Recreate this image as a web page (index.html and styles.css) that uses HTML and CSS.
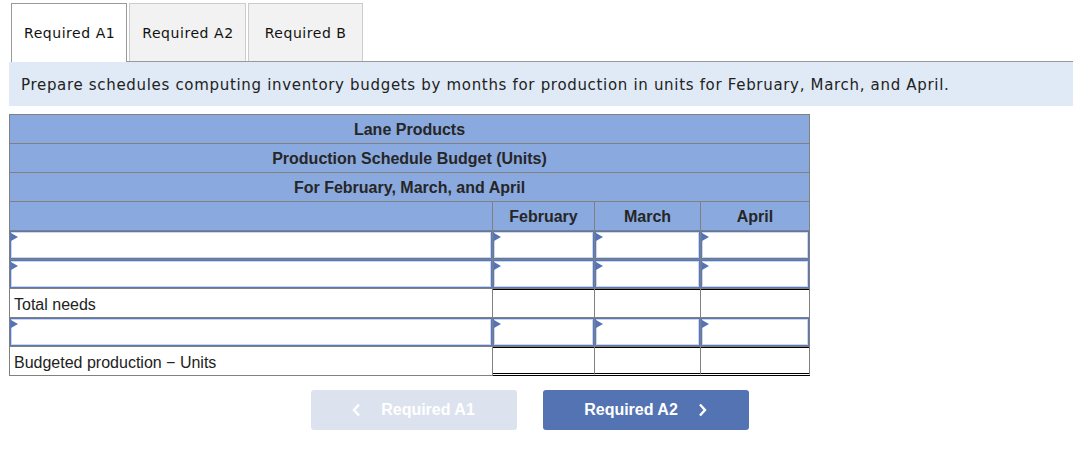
FILE: index.html
```html
<!DOCTYPE html>
<html>
<head>
<meta charset="utf-8">
<link rel="stylesheet" href="styles.css">
</head>
<body>
<div class="page">
  <div class="tabs">
    <div class="tab active">Required A1</div>
    <div class="tab">Required A2</div>
    <div class="tab">Required B</div>
  </div>
  <div class="prompt">Prepare schedules computing inventory budgets by months for production in units for February, March, and April.</div>
  <table class="sched">
    <colgroup>
      <col class="c-label">
      <col class="c-feb">
      <col class="c-mar">
      <col class="c-apr">
    </colgroup>
    <tr class="hdr"><th colspan="4">Lane Products</th></tr>
    <tr class="hdr"><th colspan="4">Production Schedule Budget (Units)</th></tr>
    <tr class="hdr"><th colspan="4">For February, March, and April</th></tr>
    <tr class="hdr"><th></th><th>February</th><th>March</th><th>April</th></tr>
    <tr class="inrow">
      <td><div class="box"></div></td>
      <td><div class="box"></div></td>
      <td><div class="box"></div></td>
      <td><div class="box"></div></td>
    </tr>
    <tr class="inrow">
      <td><div class="box"></div></td>
      <td><div class="box"></div></td>
      <td><div class="box"></div></td>
      <td><div class="box"></div></td>
    </tr>
    <tr class="txtrow">
      <td class="label">Total needs</td>
      <td class="sum"></td>
      <td class="sum"></td>
      <td class="sum"></td>
    </tr>
    <tr class="inrow">
      <td><div class="box"></div></td>
      <td><div class="box"></div></td>
      <td><div class="box"></div></td>
      <td><div class="box"></div></td>
    </tr>
    <tr class="txtrow">
      <td class="label">Budgeted production &minus; Units</td>
      <td class="total"></td>
      <td class="total"></td>
      <td class="total"></td>
    </tr>
  </table>
  <div class="nav">
    <div class="btn disabled">
      <svg class="chev" width="9" height="14" viewBox="0 0 9 14"><polyline points="7,1.5 2,7 7,12.5" fill="none" stroke="#fff" stroke-width="2.4"/></svg>
      <span>Required A1</span>
    </div>
    <div class="btn primary">
      <span>Required A2</span>
      <svg class="chev" width="9" height="14" viewBox="0 0 9 14"><polyline points="2,1.5 7,7 2,12.5" fill="none" stroke="#fff" stroke-width="2.4"/></svg>
    </div>
  </div>
</div>
</body>
</html>
```

FILE: styles.css
```css
* { box-sizing: border-box; }
html, body { margin: 0; padding: 0; background: #fff; }
.page { padding: 3px 0 0 9px; width: 1073px; }

.tabs {
  display: flex;
  gap: 2px;
  margin-left: 2px;
  border-bottom: 1px solid #999;
  height: 59px;
}
.tab {
  font-family: "DejaVu Sans", Verdana, sans-serif;
  font-size: 14px;
  letter-spacing: 0.55px;
  color: #111;
  height: 58px;
  min-width: 115px;
  padding: 0 11px 0 12px;
  display: flex;
  align-items: center;
  justify-content: center;
  background: #f2f2f2;
  border: 1px solid #ccc;
  border-bottom: none;
}
.tab.active {
  background: #fff;
  border-color: #999;
  height: 59px;
  padding-bottom: 1px;
}

.prompt {
  font-family: "DejaVu Sans", Verdana, sans-serif;
  font-size: 15px;
  letter-spacing: 0.68px;
  color: #222;
  background: #dfeaf6;
  height: 44px;
  padding: 2px 12px 0;
  display: flex;
  align-items: center;
}

.sched {
  margin-top: 8px;
  border-collapse: separate;
  border-spacing: 0;
  table-layout: fixed;
  width: 800px;
  border-top: 1px solid #808080;
  border-left: 1px solid #808080;
  font-family: "Liberation Sans", Arial, sans-serif;
  font-size: 16px;
  color: #222;
}
.c-label { width: 483px; }
.c-feb { width: 102px; }
.c-mar { width: 106px; }
.c-apr { width: 109px; }

.sched th, .sched td {
  border-right: 1px solid #808080;
  border-bottom: 1px solid #808080;
  height: 29px;
  padding: 0;
}
.hdr th {
  background: #8aa9df;
  font-weight: bold;
  text-align: center;
  color: #262626;
  padding-top: 1px;
}
.inrow td { vertical-align: top; }
.box {
  position: relative;
  height: 28px;
  border: 1px solid #5a78b8;
  box-shadow: inset 0 0 0 1px #c9d7f1;
  background: #fff;
}
.box::before {
  content: "";
  position: absolute;
  left: 0;
  top: 1px;
  border-left: 7px solid #5574b5;
  border-top: 4px solid transparent;
  border-bottom: 4px solid transparent;
}
.txtrow .label {
  padding-left: 4px;
  padding-top: 3px;
}
.txtrow .sum {
  box-shadow: inset 0 1px 0 #000;
}
.txtrow .total {
  box-shadow: inset 0 1px 0 #000;
  border-bottom: 3px double #000;
}

.nav {
  width: 1041px;
  margin-top: 14px;
  display: flex;
  justify-content: center;
  gap: 26px;
}
.btn {
  width: 206px;
  height: 40px;
  border-radius: 3px;
  display: flex;
  align-items: center;
  justify-content: center;
  gap: 20px;
  font-family: "Liberation Sans", Arial, sans-serif;
  font-weight: bold;
  font-size: 16px;
  color: #fff;
}
.btn.disabled { background: #dce3ee; }
.btn.primary { background: #5473b3; }
.chev { display: block; }
```
